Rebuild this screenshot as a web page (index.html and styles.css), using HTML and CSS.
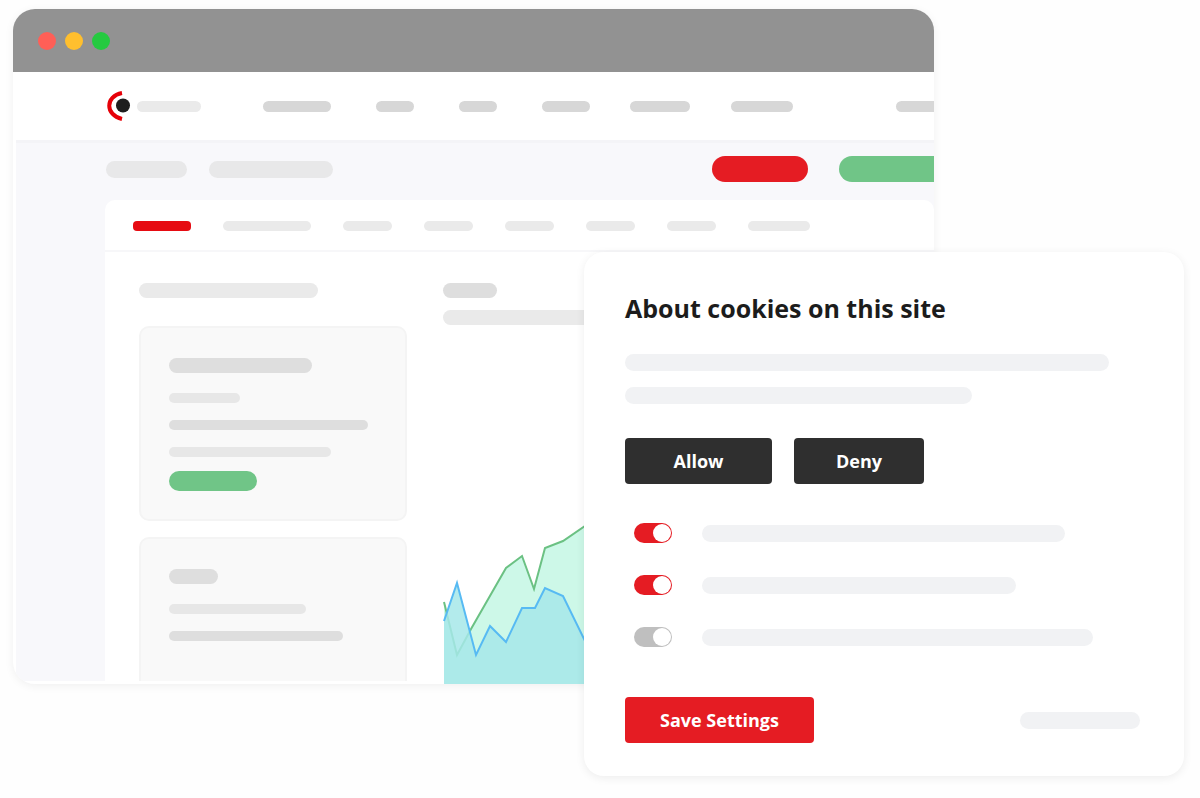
FILE: index.html
```html
<!DOCTYPE html>
<html lang="en">
<head>
  <meta charset="UTF-8">
  <meta name="viewport" content="width=device-width, initial-scale=1.0">
  <title>About cookies on this site</title>
  <link rel="stylesheet" href="styles.css">
</head>
<body>
  <div class="scene">

    <!-- Browser window -->
    <div class="browser">
      <div class="titlebar">
        <span class="dot dot-red"></span>
        <span class="dot dot-yellow"></span>
        <span class="dot dot-green"></span>
      </div>

      <header class="navbar">
        <a href="#" class="brand" aria-label="Home">
          <svg width="24" height="30" viewBox="0 0 24 30">
            <path d="M15 2 C-2 5 -2 24 15 28" fill="none" stroke="#e60008" stroke-width="4"/>
            <circle cx="16" cy="14.5" r="7" fill="#1e1e1e"/>
          </svg>
          <span class="bar light brand-name"></span>
        </a>
        <nav class="nav-links">
          <a href="#" class="bar w-68" aria-label="Products"></a>
          <a href="#" class="bar w-38" aria-label="News"></a>
          <a href="#" class="bar w-38" aria-label="Blog"></a>
          <a href="#" class="bar w-48" aria-label="About"></a>
        </nav>
        <nav class="nav-links nav-more">
          <a href="#" class="bar w-60" aria-label="Support"></a>
          <a href="#" class="bar w-62" aria-label="Contact"></a>
        </nav>
        <a href="#" class="bar w-60 account" aria-label="Account"></a>
      </header>

      <main class="page">
        <div class="toolbar">
          <span class="bar tall w-81"></span>
          <span class="bar tall w-124"></span>
          <div class="toolbar-actions">
            <button type="button" class="pill pill-red" aria-label="Cancel"></button>
            <button type="button" class="pill pill-green" aria-label="Publish"></button>
          </div>
        </div>

        <section class="panel">
          <nav class="tabs">
            <a href="#" class="bar thin active" aria-label="Overview"></a>
            <a href="#" class="bar thin light w-88" aria-label="Performance"></a>
            <a href="#" class="bar thin light w-49" aria-label="Pages"></a>
            <a href="#" class="bar thin light w-49" aria-label="Users"></a>
            <a href="#" class="bar thin light w-49" aria-label="Goals"></a>
            <a href="#" class="bar thin light w-49" aria-label="Events"></a>
            <a href="#" class="bar thin light w-49" aria-label="Files"></a>
            <a href="#" class="bar thin light w-62" aria-label="Settings"></a>
          </nav>

          <div class="content">
            <div class="cards">
              <span class="bar heading light w-179"></span>
              <article class="card">
                <span class="bar heading w-143"></span>
                <div class="lines">
                  <span class="bar thin mid w-71"></span>
                  <span class="bar thin w-199"></span>
                  <span class="bar thin mid w-162"></span>
                </div>
                <button type="button" class="pill pill-small" aria-label="Open"></button>
              </article>
              <article class="card card-cut">
                <span class="bar heading w-49"></span>
                <div class="lines">
                  <span class="bar thin mid w-137"></span>
                  <span class="bar thin w-174"></span>
                </div>
              </article>
            </div>

            <div class="stats">
              <span class="bar heading w-54"></span>
              <span class="bar heading light w-179"></span>
              <svg class="chart" width="180" height="160" viewBox="0 0 180 160">
                <polygon fill="#cdf8e8" points="1,78 14,131 28,105 63,44 79,32 91,65 102,24 120,17 142,2 180,0 180,160 1,160"/>
                <polyline fill="none" stroke="#6bc183" stroke-width="2" points="1,78 14,131 28,105 63,44 79,32 91,65 102,24 120,17 142,2 180,0"/>
                <polygon fill="#a6e8e9" fill-opacity="0.85" points="1,97 14,59 33,131 47,102 63,118 79,84 92,84 102,64 120,72 142,117 180,130 180,160 1,160"/>
                <polyline fill="none" stroke="#57baf3" stroke-width="2" points="1,97 14,59 33,131 47,102 63,118 79,84 92,84 102,64 120,72 142,117 180,130"/>
              </svg>
            </div>
          </div>
        </section>
      </main>
    </div>

    <!-- Cookie dialog -->
    <div class="dialog" role="dialog" aria-labelledby="dialogTitle">
      <h2 class="dialog-title" id="dialogTitle">About cookies on this site</h2>
      <div class="dialog-text">
        <span class="bar pale w-484"></span>
        <span class="bar pale w-347"></span>
      </div>

      <div class="dialog-buttons">
        <button type="button" class="btn btn-allow">Allow</button>
        <button type="button" class="btn btn-deny">Deny</button>
      </div>

      <div class="options">
        <div class="option">
          <input type="checkbox" class="toggle" id="analytics" checked>
          <label for="analytics" class="bar pale w-363" aria-label="Analytics"></label>
        </div>
        <div class="option">
          <input type="checkbox" class="toggle" id="functional" checked>
          <label for="functional" class="bar pale w-314" aria-label="Functional"></label>
        </div>
        <div class="option">
          <input type="checkbox" class="toggle" id="marketing">
          <label for="marketing" class="bar pale w-391" aria-label="Marketing"></label>
        </div>
      </div>

      <div class="dialog-footer">
        <button type="button" class="btn btn-save">Save Settings</button>
        <a href="#" class="bar pale w-120" aria-label="Cookie policy"></a>
      </div>
    </div>

  </div>
</body>
</html>
```
FILE: styles.css
```css
* {
  margin: 0;
  padding: 0;
  box-sizing: border-box;
}

body {
  font-family: 'Open Sans', sans-serif;
  background-color: #fefefe;
}

.scene {
  position: relative;
  min-height: 100vh;
  padding: 9px 266px 22px 13px;
}

/* Placeholder bars */
.bar {
  display: block;
  flex-shrink: 0;
  height: 11px;
  border-radius: 9px;
  background-color: #d7d7d7;
}

.bar.thin { height: 10px; background-color: #dedede; }
.bar.heading { height: 15px; background-color: #dedede; }
.bar.tall { height: 17px; background-color: #e8e8e9; }
.bar.pale { height: 17px; background-color: #f1f2f4; }
.bar.mid { background-color: #e7e7e7; }
.bar.light { background-color: #eaeaea; }

.w-38 { width: 38px; }
.w-48 { width: 48px; }
.w-49 { width: 49px; }
.w-54 { width: 54px; }
.w-60 { width: 60px; }
.w-62 { width: 62px; }
.w-68 { width: 68px; }
.w-71 { width: 71px; }
.w-81 { width: 81px; }
.w-88 { width: 88px; }
.w-120 { width: 120px; }
.w-124 { width: 124px; }
.w-137 { width: 137px; }
.w-143 { width: 143px; }
.w-162 { width: 162px; }
.w-174 { width: 174px; }
.w-179 { width: 179px; }
.w-199 { width: 199px; }
.w-314 { width: 314px; }
.w-347 { width: 347px; }
.w-363 { width: 363px; }
.w-391 { width: 391px; }
.w-484 { width: 484px; }

/* Browser window */
.browser {
  overflow: hidden;
  background-color: white;
  border-radius: 22px;
  box-shadow: 0 2px 10px rgba(0,0,0,0.06);
}

.titlebar {
  display: flex;
  align-items: center;
  gap: 9px;
  height: 63px;
  padding-left: 25px;
  background-color: #929292;
}

.dot {
  width: 18px;
  height: 18px;
  border-radius: 50%;
}

.dot-red { background-color: #ff5f57; }
.dot-yellow { background-color: #ffbf2e; }
.dot-green { background-color: #25ca40; }

.navbar {
  display: flex;
  align-items: center;
  height: 68px;
  padding-left: 94px;
}

.brand {
  display: flex;
  align-items: center;
  gap: 6px;
  margin-right: 62px;
}

.brand-name {
  width: 64px;
}

.nav-links {
  display: flex;
  gap: 45px;
}

.nav-more {
  gap: 41px;
  margin-left: 40px;
}

.account {
  margin-left: 103px;
}

/* Page inside the window */
.page {
  margin-left: 3px;
  background-color: #f8f8fb;
  border-top: 3px solid #f4f4f7;
  box-shadow: inset 0 -3px white;
}

.toolbar {
  display: flex;
  align-items: center;
  gap: 22px;
  padding: 13px 0 18px 90px;
}

.toolbar-actions {
  display: flex;
  gap: 31px;
  margin-left: auto;
  margin-right: -20px;
}

.pill {
  height: 26px;
  border: none;
  border-radius: 13px;
  background-color: #70c587;
  cursor: pointer;
}

.pill-red {
  width: 96px;
  background-color: #e51c23;
}

.pill-green {
  width: 115px;
}

.pill-small {
  display: block;
  width: 88px;
  height: 20px;
  margin-top: 14px;
}

.panel {
  margin-left: 89px;
  background-color: white;
  border-radius: 10px 10px 0 0;
}

.tabs {
  display: flex;
  align-items: center;
  gap: 32px;
  padding: 21px 0 19px 28px;
  border-bottom: 2px solid #f7f7f9;
}

.bar.active {
  width: 58px;
  border-radius: 4px;
  background-color: #e60b12;
}

.content {
  display: flex;
  gap: 36px;
  padding: 31px 0 0 34px;
}

.cards {
  width: 268px;
  padding-bottom: 3px;
}

.card {
  margin-top: 28px;
  padding: 30px 28px 28px;
  border: 2px solid #f4f4f4;
  border-radius: 10px;
  background-color: #f9f9f9;
}

.card-cut {
  margin-top: 16px;
  padding-bottom: 40px;
  border-bottom: none;
  border-radius: 10px 10px 0 0;
}

.lines {
  display: flex;
  flex-direction: column;
  gap: 17px;
  margin-top: 20px;
}

.stats {
  display: flex;
  flex-direction: column;
  gap: 12px;
}

.chart {
  margin-top: auto;
}

/* Cookie dialog */
.dialog {
  position: absolute;
  top: 252px;
  right: 16px;
  width: 50%;
  padding: 40px 44px 33px 41px;
  background-color: white;
  border-radius: 20px;
  box-shadow: 0 2px 10px rgba(0,0,0,0.07);
}

.dialog-title {
  font-size: 25px;
  line-height: 32px;
  font-weight: 700;
  color: #1c1c1c;
}

.dialog-text {
  display: flex;
  flex-direction: column;
  gap: 16px;
  margin-top: 30px;
}

.dialog-buttons {
  display: flex;
  gap: 22px;
  margin-top: 34px;
}

.btn {
  height: 46px;
  border: none;
  border-radius: 4px;
  background-color: #2f2f2f;
  color: white;
  font-family: inherit;
  font-size: 18px;
  font-weight: 700;
  cursor: pointer;
}

.btn-allow { width: 147px; }
.btn-deny { width: 130px; }

.btn-save {
  width: 189px;
  background-color: #e51c23;
}

.options {
  display: flex;
  flex-direction: column;
  gap: 32px;
  margin-top: 39px;
  padding-left: 9px;
}

.option {
  display: flex;
  align-items: center;
  gap: 30px;
}

.toggle {
  appearance: none;
  display: flex;
  justify-content: flex-end;
  width: 38px;
  height: 20px;
  padding: 1px;
  border-radius: 10px;
  background-color: #bfbfbf;
  cursor: pointer;
}

.toggle::before {
  content: '';
  width: 18px;
  height: 18px;
  border-radius: 50%;
  background-color: white;
}

.toggle:checked {
  background-color: #e51c23;
}

.dialog-footer {
  display: flex;
  justify-content: space-between;
  align-items: center;
  margin-top: 50px;
}
```
